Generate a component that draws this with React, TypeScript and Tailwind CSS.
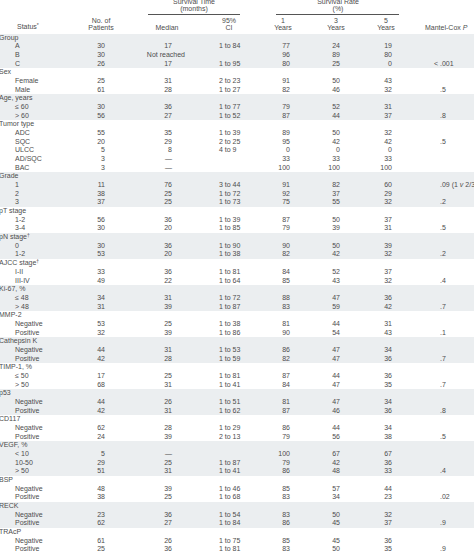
import React from "react";

type Row = {
  label: React.ReactNode;
  n: string;
  med: React.ReactNode;
  ci: string;
  y1: string;
  y3: string;
  y5: string;
  p?: React.ReactNode;
  pre?: string;
};
type Group = { label: React.ReactNode; rows: Row[] };

const r = (
  label: React.ReactNode,
  n: string,
  med: React.ReactNode,
  ci: string,
  y1: string,
  y3: string,
  y5: string,
  p?: React.ReactNode,
  pre?: string
): Row => ({ label, n, med, ci, y1, y3, y5, p, pre });

const Sup = ({ c }: { c: string }) => (
  <span className="relative -top-[2px] text-[5px]">{c}</span>
);

const D = "\u2014";

const groups: Group[] = [
  {
    label: "Group",
    rows: [
      r("A", "30", "17", "1 to 84", "77", "24", "19"),
      r("B", "30", <span className="inline-block -mr-[13px]">Not reached</span>, "", "96", "89", "80"),
      r("C", "26", "17", "1 to 95", "80", "25", "0", ".001", "<"),
    ],
  },
  {
    label: "Sex",
    rows: [
      r("Female", "25", "31", "2 to 23", "91", "50", "43"),
      r("Male", "61", "28", "1 to 27", "82", "46", "32", ".5"),
    ],
  },
  {
    label: "Age, years",
    rows: [
      r("\u2264 60", "30", "36", "1 to 77", "79", "52", "31"),
      r("> 60", "56", "27", "1 to 52", "87", "44", "37", ".8"),
    ],
  },
  {
    label: "Tumor type",
    rows: [
      r("ADC", "55", "35", "1 to 39", "89", "50", "32"),
      r("SQC", "20", "29", "2 to 25", "95", "42", "42", ".5"),
      r("ULCC", "5", "8", "4 to 9", "0", "0", "0"),
      r("AD/SQC", "3", D, "", "33", "33", "33"),
      r("BAC", "3", D, "", "100", "100", "100"),
    ],
  },
  {
    label: "Grade",
    rows: [
      r("1", "11", "76", "3 to 44", "91", "82", "60", <>.09 (1 <i>v</i> 2/3)</>),
      r("2", "38", "25", "1 to 72", "92", "37", "29"),
      r("3", "37", "25", "1 to 73", "75", "55", "32", ".2"),
    ],
  },
  {
    label: "pT stage",
    rows: [
      r("1-2", "56", "36", "1 to 39", "87", "50", "37"),
      r("3-4", "30", "20", "1 to 85", "79", "39", "31", ".5"),
    ],
  },
  {
    label: <>pN stage<Sup c={"\u2020"} /></>,
    rows: [
      r("0", "30", "36", "1 to 90", "90", "50", "39"),
      r("1-2", "53", "20", "1 to 38", "82", "42", "32", ".2"),
    ],
  },
  {
    label: <>AJCC stage<Sup c={"\u2020"} /></>,
    rows: [
      r("I-II", "33", "36", "1 to 81", "84", "52", "37"),
      r("III-IV", "49", "22", "1 to 64", "85", "43", "32", ".4"),
    ],
  },
  {
    label: "Ki-67, %",
    rows: [
      r("\u2264 48", "34", "31", "1 to 72", "88", "47", "36"),
      r("> 48", "31", "39", "1 to 87", "83", "59", "42", ".7"),
    ],
  },
  {
    label: "MMP-2",
    rows: [
      r("Negative", "53", "25", "1 to 38", "81", "44", "31"),
      r("Positive", "32", "39", "1 to 86", "90", "54", "43", ".1"),
    ],
  },
  {
    label: "Cathepsin K",
    rows: [
      r("Negative", "44", "31", "1 to 53", "86", "47", "34"),
      r("Positive", "42", "28", "1 to 59", "82", "47", "36", ".7"),
    ],
  },
  {
    label: "TIMP-1, %",
    rows: [
      r("\u2264 50", "17", "25", "1 to 81", "87", "44", "36"),
      r("> 50", "68", "31", "1 to 41", "84", "47", "35", ".7"),
    ],
  },
  {
    label: "p53",
    rows: [
      r("Negative", "44", "26", "1 to 51", "81", "47", "34"),
      r("Positive", "42", "31", "1 to 62", "87", "46", "36", ".8"),
    ],
  },
  {
    label: "CD117",
    rows: [
      r("Negative", "62", "28", "1 to 29", "86", "44", "34"),
      r("Positive", "24", "39", "2 to 13", "79", "56", "38", ".5"),
    ],
  },
  {
    label: "VEGF, %",
    rows: [
      r("< 10", "5", D, "", "100", "67", "67"),
      r("10-50", "29", "25", "1 to 87", "79", "42", "36"),
      r("> 50", "51", "31", "1 to 41", "86", "48", "33", ".4"),
    ],
  },
  {
    label: "BSP",
    rows: [
      r("Negative", "48", "39", "1 to 46", "85", "57", "44"),
      r("Positive", "38", "25", "1 to 68", "83", "34", "23", ".02"),
    ],
  },
  {
    label: "RECK",
    rows: [
      r("Negative", "23", "36", "1 to 54", "83", "50", "32"),
      r("Positive", "62", "27", "1 to 84", "86", "45", "37", ".9"),
    ],
  },
  {
    label: "TRAcP",
    rows: [
      r("Negative", "61", "26", "1 to 75", "85", "45", "36"),
      r("Positive", "25", "36", "1 to 81", "83", "50", "35", ".9"),
    ],
  },
];

function DataRow({ row }: { row: Row }) {
  return (
    <div className="flex h-[8.68px] whitespace-nowrap">
      <div className="w-[80px] shrink-0 pl-[15px]">{row.label}</div>
      <div className="w-[25px] shrink-0 text-right">{row.n}</div>
      <div className="w-[67px] shrink-0 text-right">{row.med}</div>
      <div className="w-[80px] shrink-0 pl-[47px]">{row.ci}</div>
      <div className="w-[38px] shrink-0 text-right">{row.y1}</div>
      <div className="w-[50px] shrink-0 text-right">{row.y3}</div>
      <div className="w-[52px] shrink-0 text-right">{row.y5}</div>
      <div className="shrink-0 pl-[38px] flex">
        <span className="w-[10px] shrink-0 text-right pr-[2px]">{row.pre ?? ""}</span>
        <span>{row.p ?? ""}</span>
      </div>
    </div>
  );
}

export default function App() {
  return (
    <div className="w-[474px] h-[555px] overflow-hidden bg-white text-[#4d4d4d] text-[7px] leading-[8.68px] font-['Liberation_Sans',Arial,sans-serif]">
      {/* Header */}
      <div className="flex items-end h-[35.7px] -mt-[2px] pb-[2.7px] leading-[7px] whitespace-nowrap">
        <div className="w-[70px] shrink-0 pl-[17px]">
          Status<Sup c="*" />
        </div>
        <div className="w-[62px] shrink-0 text-center">
          No. of
          <br />
          Patients
        </div>
        <div className="w-[124px] shrink-0 flex flex-col">
          <div className="text-center">
            Survival Time
            <br />
            (months)
          </div>
          <div className="mt-[2px] mx-[16px] h-px bg-[#555]" />
          <div className="mt-[2px] flex items-end">
            <div className="w-[70px] text-center">Median</div>
            <div className="w-[54px] text-center">
              95%
              <br />
              CI
            </div>
          </div>
        </div>
        <div className="w-[154px] shrink-0 flex flex-col">
          <div className="text-center pl-[10px]">
            Survival Rate
            <br />
            (%)
          </div>
          <div className="mt-[2px] ml-[20px] mr-[11px] h-px bg-[#555]" />
          <div className="mt-[2px] flex items-end">
            <div className="w-[54px] text-center">
              1
              <br />
              Years
            </div>
            <div className="w-[52px] text-center">
              3
              <br />
              Years
            </div>
            <div className="w-[48px] text-center">
              5
              <br />
              Years
            </div>
          </div>
        </div>
        <div className="shrink-0 pl-[15px]">
          Mantel-Cox <i>P</i>
        </div>
      </div>

      {/* Body */}
      {groups.map((g, gi) => (
        <div key={gi} className={gi % 2 === 0 ? "bg-[#ebeef0]" : "bg-white"}>
          <div className="h-[8.68px] -ml-[1px] whitespace-nowrap">{g.label}</div>
          {g.rows.map((row, ri) => (
            <DataRow key={ri} row={row} />
          ))}
        </div>
      ))}
    </div>
  );
}
